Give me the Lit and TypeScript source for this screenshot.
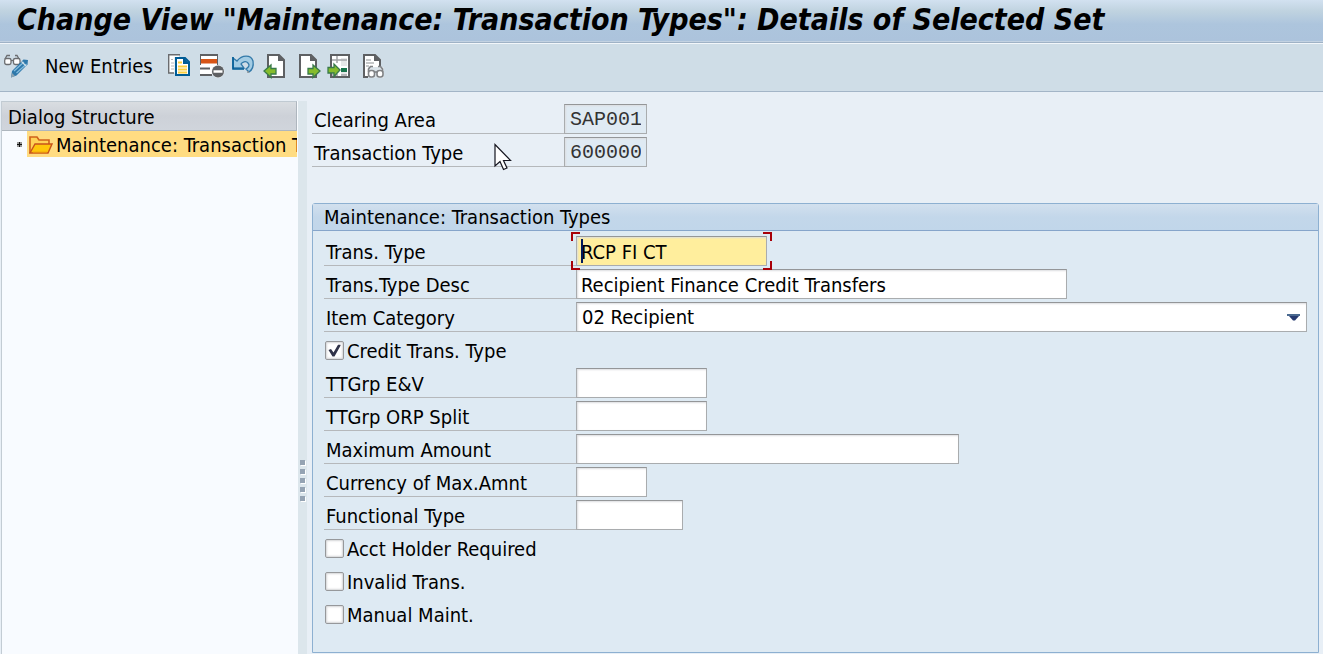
import { LitElement, html, css, svg, nothing, TemplateResult } from "lit";
import { customElement, property } from "lit/decorators.js";

const page = (x: number) => svg`
  <path d="M${x + 1} 1H${x + 12}L${x + 17} 6V23H${x + 1}Z" fill="#fff" stroke="#5e6063" stroke-width="2"/>
  <path d="M${x + 11} 1V7H${x + 18}Z" fill="#5e6063"/>`;

const icons: Record<string, TemplateResult> = {
  change: svg`
    <g fill="#fff" stroke="#6b6d70" stroke-width="1.3">
      <path d="M1 5L3 1.500H6M11 1.500H13L15 5" fill="none"/>
      <rect x=".7" y="4.500" width="6.300" height="6" rx="1.800"/><rect x="9.500" y="4.500" width="6.500" height="6" rx="1.800"/>
      <path d="M7 6.500H10" fill="none"/>
    </g>
    <path d="M7 23.500L8 17L19.500 5.500L24 6L23.500 10.500L12.500 21.500Z" fill="#2e78ab"/>
    <path d="M10 17L20 8M12.500 19L22.500 10" stroke="#86bddd" stroke-width="1.200"/>
    <path d="M17.500 7.500L22 12" stroke="#cfdde8" stroke-width="1.200"/>
    <path d="M7 23.500L8 19L11 22Z" fill="#8fa3b0"/>`,
  copy: svg`
    <path d="M.7 .7H11V3H6.500V19H.7Z" fill="#fff"/>
    <path d="M12 .7H.7V19H6" fill="none" stroke="#6a6c6f" stroke-width="1.400"/>
    <path d="M3 5.500H5M3 9H6M3 12H6M3 15H6" stroke="#b4b8bb" stroke-width="1"/>
    <path d="M8 4H17L21 8V21H8Z" fill="#fff" stroke="#005c96" stroke-width="2"/>
    <path d="M15 3V10H22Z" fill="#005c96"/>
    <path d="M10 8.500H14M10 12.500H19M10 15.500H19M10 18.500H19" stroke="#fccf3f" stroke-width="2"/>`,
  remove: svg`
    <path d="M0 1H18V21H0Z" fill="#fff"/>
    <path d="M0 1H18" stroke="#5e6063" stroke-width="2"/>
    <path d="M1 5H17V9.500H1Z" fill="#d75517"/>
    <path d="M.5 1V11M17.500 1V11" stroke="#5e6063" stroke-width="1"/>
    <path d="M0 14.500H10M0 21H12" stroke="#5e6063" stroke-width="2"/>
    <circle cx="18" cy="17.500" r="6.500" fill="#e8eef2"/>
    <circle cx="18" cy="17.500" r="6" fill="#5e6063"/>
    <path d="M13.500 17.500H22.500" stroke="#fff" stroke-width="2.500"/>`,
  undo: svg`
    <path d="M1 4L5 7C10 .5 19 .5 21 7C22 13 20 16 17 18L14 15C17 13 18 11 16 9C14 6.500 10 8 9 10L12 14H1Z"
      fill="#a3cce4" stroke="#3279a9" stroke-width="1.300"/>
    <path d="M1 3V15H12" fill="none" stroke="#005c96" stroke-width="1.600"/>
    <path d="M15 18H17" stroke="#8a9094" stroke-width="1.500"/>`,
  previous: svg`${page(3)}
    <path d="M0 17L7 11V14.500H12V20H7V23.500Z" fill="#85bc2c" stroke="#397a4a" stroke-width="1.300"/>`,
  next: svg`${page(3)}
    <path d="M24 17L17 11V14.500H12V20H17V23.500Z" fill="#85bc2c" stroke="#397a4a" stroke-width="1.300"/>`,
  select: svg`
    <path d="M3 1H21V23H3Z" fill="#fff" stroke="#5e6063" stroke-width="2"/>
    <path d="M13 4H19V12H13ZM13 18H19V21H13Z" fill="#e6e7e8"/>
    <path d="M4 6H19M9 2V9M4 21H10M13 21H19" stroke="#a2a4a6" stroke-width="1.500"/>
    <path d="M13 14H19V18H13Z" fill="#18754c"/>
    <path d="M12 16L6 10V13.500H0V19H6V22.500Z" fill="#85bc2c" stroke="#397a4a" stroke-width="1.300"/>`,
  print: svg`${page(3)}
    <path d="M6 6H11M6 9H14M6 12H9" stroke="#b4b6b8" stroke-width="1.500"/>
    <path d="M8 13H24V24H8Z" fill="#dbe4ea"/>
    <g fill="#fff" stroke="#808285" stroke-width="1.600">
      <path d="M8.500 18V15L10.500 12.500H13M18 12.500H20.500L22.500 15V18" fill="none"/>
      <rect x="8.500" y="16.500" width="6" height="6.500" rx="2.500"/><rect x="17" y="16.500" width="6" height="6.500" rx="2.500"/>
      <path d="M14 18H17.500" fill="none"/>
    </g>`,
};

interface Field {
  label: string;
  value?: string;
  size?: string;
  kind?: "text" | "select" | "check" | "focus";
  checked?: boolean;
}

const keyFields: Field[] = [
  { label: "Clearing Area", value: "SAP001" },
  { label: "Transaction Type", value: "600000" },
];

const detailFields: Field[] = [
  { label: "Trans. Type", value: "RCP FI CT", size: "medium", kind: "focus" },
  { label: "Trans.Type Desc", value: "Recipient Finance Credit Transfers", size: "long" },
  { label: "Item Category", value: "02 Recipient", kind: "select" },
  { label: "Credit Trans. Type", kind: "check", checked: true },
  { label: "TTGrp E&V", size: "short" },
  { label: "TTGrp ORP Split", size: "short" },
  { label: "Maximum Amount", size: "amount" },
  { label: "Currency of Max.Amnt", size: "tiny" },
  { label: "Functional Type", size: "code" },
  { label: "Acct Holder Required", kind: "check" },
  { label: "Invalid Trans.", kind: "check" },
  { label: "Manual Maint.", kind: "check" },
];

const fontStack = css`Tahoma, "DejaVu Sans Condensed", "DejaVu Sans", sans-serif`;

@customElement("tool-button")
export class ToolButton extends LitElement {
  @property() icon = "";
  @property() label = "";

  static styles = css`
    :host { display: block; }
    .button { display: block; margin: 0; padding: 0; border: 0; background: none; }
    .icon { display: block; width: 24px; height: 24px; overflow: visible; }
  `;

  render() {
    return html`<button class="button" type="button" aria-label=${this.label}>
      <svg class="icon" viewBox="0 0 24 24" fill="none">${icons[this.icon]}</svg>
    </button>`;
  }
}

@customElement("form-row")
export class FormRow extends LitElement {
  @property({ attribute: false }) field!: Field;
  @property({ type: Boolean }) locked = false;

  static styles = css`
    * { box-sizing: border-box; }
    :host { display: block; font: 20px/24px ${fontStack}; color: #000; }
    .row { display: flex; height: 30px; }
    .label {
      flex: 0 0 252px;
      padding: 4px 2px 0;
      border-bottom: 1px solid #b5b8bb;
      white-space: nowrap;
    }
    .box { position: relative; flex: 0 1 auto; min-width: 0; }
    .wide { flex: 1; }
    .input {
      display: block;
      width: 100%;
      height: 30px;
      margin: 0;
      padding: 1px 4px 0;
      border: 1px solid #a9acae;
      border-top-color: #949698;
      border-radius: 0;
      outline: 0;
      background: #fff;
      box-shadow: inset 1px 1px 2px #dcdde0;
      color: #000;
      font: inherit;
    }
    .select {
      appearance: none;
      padding: 0 5px;
      background: #fff url("data:image/svg+xml,%3Csvg xmlns='http://www.w3.org/2000/svg' width='14' height='9'%3E%3Cpath d='M0 1h13v2H0z' fill='%234a6a90'/%3E%3Cpath d='M2 3h10L8 7.500H6z' fill='%23263a70'/%3E%3C/svg%3E") no-repeat right 5px center;
    }
    .locked {
      padding: 0 5px;
      background: #dfeaf3;
      font-family: "Courier New", "Liberation Mono", monospace;
      color: #333;
    }
    .focused { background: #ffee9d; }
    .key { width: 83px; }
    .tiny { width: 71px; }
    .code { width: 107px; }
    .short { width: 131px; }
    .medium { width: 191px; }
    .amount { width: 383px; }
    .long { width: 491px; }
    .corners {
      position: absolute;
      inset: -4px -5px;
      z-index: 1;
      pointer-events: none;
      --c: linear-gradient(#a80008, #a80008);
      background:
        var(--c) 0 0 / 9px 2px, var(--c) 0 0 / 2px 9px,
        var(--c) 100% 0 / 9px 2px, var(--c) 100% 0 / 2px 9px,
        var(--c) 0 100% / 9px 2px, var(--c) 0 100% / 2px 9px,
        var(--c) 100% 100% / 9px 2px, var(--c) 100% 100% / 2px 9px;
      background-repeat: no-repeat;
    }
    .caret {
      position: absolute;
      left: 5px;
      top: 3px;
      width: 2px;
      height: 24px;
      background: #001a5c;
    }
    .check { display: flex; align-items: center; gap: 3px; height: 30px; padding-left: 1px; }
    .text { padding-top: 1px; }
    .tick {
      appearance: none;
      width: 19px;
      height: 19px;
      margin: 0;
      border: 1px solid #96989b;
      border-radius: 2px;
      background: #fff;
      box-shadow: inset 0 0 2px 1px #d4d5d7;
    }
    .tick:checked {
      background: #fff url("data:image/svg+xml,%3Csvg xmlns='http://www.w3.org/2000/svg' width='13' height='13'%3E%3Cpath d='M.5 6l2.500-1 2.500 3.500L10 .8h2.500v1L6.500 12.500H4.500z' fill='%23303349'/%3E%3C/svg%3E") no-repeat center;
    }
  `;

  render() {
    const f = this.field;
    if (f.kind === "check") {
      return html`<div class="check">
        <input class="tick" id="f" type="checkbox" ?checked=${f.checked} />
        <label class="text" for="f">${f.label}</label>
      </div>`;
    }
    if (f.kind === "select") {
      return html`<div class="row">
        <label class="label" for="f">${f.label}</label>
        <div class="box wide"><select class="input select" id="f"><option>${f.value}</option></select></div>
      </div>`;
    }
    const focus = f.kind === "focus";
    return html`<div class="row">
      <label class="label" for="f">${f.label}</label>
      <div class="box ${this.locked ? "key" : f.size}">
        <input
          class="input ${this.locked ? "locked" : ""} ${focus ? "focused" : ""}"
          id="f" type="text" .value=${f.value ?? ""} ?readonly=${this.locked} />
        ${focus ? html`<span class="corners"></span><span class="caret"></span>` : nothing}
      </div>
    </div>`;
  }
}

@customElement("app-root")
export class AppRoot extends LitElement {
  static styles = css`
    * { box-sizing: border-box; }
    :host {
      display: flex;
      flex-direction: column;
      position: relative;
      min-height: 100vh;
      background: #e8eff6;
      color: #000;
      font: 20px/24px ${fontStack};
    }
    .title {
      margin: 0;
      height: 44px;
      padding: 3px 17px 0;
      border-bottom: 1px solid #f2f6fa;
      background: linear-gradient(#d2e1f0, #c0d3e0 11px, #adc5dd 24px, #acc3dc 41px, #c3d2e2 41px, #c3d2e2 42px, #9fb2c6 42px);
      font: italic bold 30px/34px ${fontStack};
      white-space: nowrap;
      overflow: hidden;
    }
    .toolbar {
      display: flex;
      align-items: center;
      height: 48px;
      padding: 0 4px 3px;
      border-bottom: 1px solid #a3b5c7;
      background: #cfdde7;
    }
    .entries {
      margin: 0 15px 0 17px;
      padding: 0;
      border: 0;
      background: none;
      color: inherit;
      font: inherit;
      white-space: nowrap;
      width: 108px;
      text-align: left;
    }
    .tools { display: flex; gap: 8px; }
    .main { display: flex; flex: 1; padding-top: 9px; }
    .nav {
      flex: 0 0 297px;
      min-width: 0;
      margin-left: 1px;
      border-left: 1px solid #c3ccd4;
      border-right: 1px solid #f8fbff;
      background: #f8fbff;
    }
    .heading {
      margin: 0;
      height: 30px;
      padding: 3px 6px 0;
      border: 1px solid #aeb6be;
      border-left: 0;
      border-top-color: #c0cad2;
      background: linear-gradient(#d9dde1, #cdd1d8 50%, #d0d5dc);
      font: inherit;
    }
    .tree { margin: 0; padding: 0; list-style: none; }
    .item { display: flex; align-items: center; }
    .bullet { flex: 0 0 25px; padding-left: 15px; }
    .star { display: block; width: 5px; height: 5px; }
    .node {
      display: flex;
      align-items: center;
      flex: 1;
      min-width: 0;
      gap: 3px;
      height: 26px;
      padding: 1px 0 0 2px;
      background: #ffdc82;
      color: inherit;
      text-decoration: none;
      overflow: hidden;
      white-space: nowrap;
    }
    .folder { flex: none; width: 24px; height: 18px; }
    .splitter {
      display: flex;
      flex-direction: column;
      align-items: center;
      gap: 4px;
      flex: 0 0 9px;
      background: #dce6ec;
    }
    .splitter::before { content: ""; flex: 7; }
    .splitter::after { content: ""; flex: 3; margin-top: -3px; }
    .dot { width: 5px; height: 5px; background: #95a3b3; box-shadow: 1px 1px #fff; }
    .detail { display: flex; flex-direction: column; flex: 1; min-width: 0; padding: 3px 4px 1px 5px; }
    .rows { display: flex; flex-direction: column; gap: 3px; }
    .group {
      display: flex;
      flex-direction: column;
      flex: 1;
      margin-top: 36px;
      border: 1px solid #8db0d1;
      border-radius: 3px 3px 0 0;
      background: #deeaf3;
    }
    .caption {
      margin: 0;
      height: 27px;
      padding: 1px 11px 0;
      border-bottom: 1px solid #86a5ca;
      background: linear-gradient(#d2e0ee, #c3d7ea 50%, #c1d6ea);
      font: inherit;
    }
    .fields { padding: 5px 11px 12px; }
    .pointer { position: absolute; left: 494px; top: 143px; width: 19px; height: 30px; pointer-events: none; }
  `;

  render() {
    const tools = [
      ["copy", "Copy As"],
      ["remove", "Delete"],
      ["undo", "Undo Change"],
      ["previous", "Previous Entry"],
      ["next", "Next Entry"],
      ["select", "Other Entry"],
      ["print", "Display Details"],
    ];
    return html`
      <h1 class="title">Change View "Maintenance: Transaction Types": Details of Selected Set</h1>
      <div class="toolbar" role="toolbar">
        <tool-button icon="change" label="Display / Change"></tool-button>
        <button class="entries" type="button">New Entries</button>
        <div class="tools">
          ${tools.map(([i, l]) => html`<tool-button icon=${i} label=${l}></tool-button>`)}
        </div>
      </div>
      <main class="main">
        <nav class="nav">
          <h2 class="heading">Dialog Structure</h2>
          <ul class="tree">
            <li class="item">
              <span class="bullet">
                <svg class="star" viewBox="0 0 5 5"><path d="M0 0H5V5H0Z" fill="#999"/><path d="M2.500 0V5M0 2.500H5" stroke="#111"/></svg>
              </span>
              <a class="node" href="#">
                <svg class="folder" viewBox="0 0 24 18">
                  <path d="M1 17V1H8L10 4H20V8" fill="#ffd257" stroke="#cf621c" stroke-width="1.600"/>
                  <path d="M1 17L6 8H23L19 17Z" fill="#ffc60a" stroke="#c8531b" stroke-width="1.400"/>
                  <path d="M4 16.500H18" stroke="#e58f11" stroke-width="1.500"/>
                </svg>
                <span>Maintenance: Transaction Types</span>
              </a>
            </li>
          </ul>
        </nav>
        <div class="splitter">${[1, 2, 3, 4, 5].map(() => html`<span class="dot"></span>`)}</div>
        <section class="detail">
          <div class="rows">
            ${keyFields.map((f) => html`<form-row .field=${f} locked></form-row>`)}
          </div>
          <section class="group">
            <h2 class="caption">Maintenance: Transaction Types</h2>
            <div class="rows fields">
              ${detailFields.map((f) => html`<form-row .field=${f}></form-row>`)}
            </div>
          </section>
        </section>
      </main>
      <svg class="pointer" viewBox="0 0 19 30">
        <path d="M1 1.500V23L6 18.500L9.500 26.500L13 25L9.500 17.500H16.500Z" fill="#fff" stroke="#15151f" stroke-width="1.200"/>
      </svg>
    `;
  }
}
